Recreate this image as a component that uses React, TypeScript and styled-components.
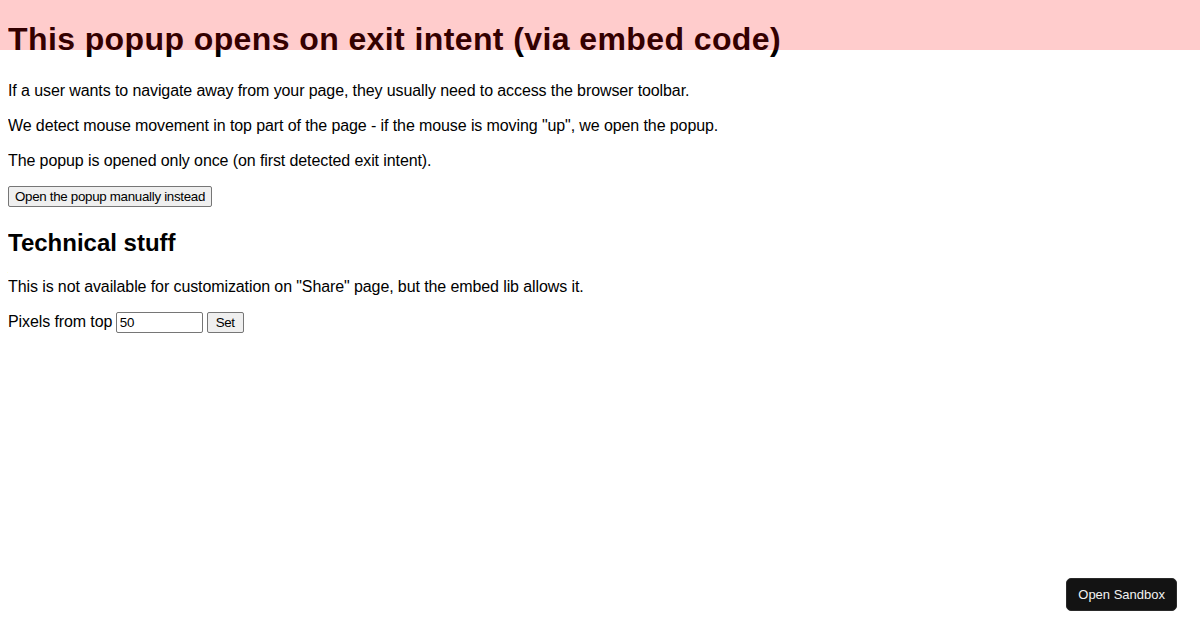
import styled, { createGlobalStyle } from "styled-components";

const GlobalStyle = createGlobalStyle`
  body {
    margin: 8px;
    font-family: "Liberation Sans", Arial, sans-serif;
    font-size: 16px;
    color: #000;
    background: #fff;
  }
`;

const Title = styled.h1`
  font-size: 32px;
  font-weight: bold;
  letter-spacing: 0.4px;
  line-height: 37px;
  margin: 13px 0 23px;
`;

const SubTitle = styled.h2`
  font-size: 24px;
  font-weight: bold;
  line-height: 28px;
  margin: 22px 0 20px;
`;

const Text = styled.p`
  margin: 16px 0;
  line-height: 19px;
  letter-spacing: -0.1px;
`;

const NativeButton = styled.button<{ $wide?: boolean }>`
  font: 13.333px "Liberation Sans", Arial, sans-serif;
  letter-spacing: -0.3px;
  line-height: 15px;
  padding: 2px ${(p) => (p.$wide ? 8 : 6)}px;
  color: #000;
  background: #efefef;
  border: 1px solid #767676;
  border-radius: 2px;
`;

const PixelsInput = styled.input`
  font: 13.333px "Liberation Sans", Arial, sans-serif;
  box-sizing: border-box;
  width: 87px;
  height: 21px;
  padding: 1px 3px;
  border: 1px solid #767676;
  border-radius: 2px;
  margin: 0 4px 0 -1px;
`;

// marks the exit-intent zone at the top of the page
const ExitZone = styled.div<{ $height: number }>`
  position: fixed;
  top: 0;
  left: 0;
  right: 0;
  height: ${(p) => p.$height}px;
  background: rgba(255, 0, 0, 0.2);
  pointer-events: none;
`;

const SandboxButton = styled.button`
  position: fixed;
  right: 23px;
  bottom: 19px;
  height: 33px;
  padding: 0 11px;
  font: 13px "Liberation Sans", Arial, sans-serif;
  color: #f2f2f2;
  background: #131313;
  border: 1px solid #2a2a2a;
  border-radius: 5px;
`;

export default function App() {
  const pixels = 50;

  return (
    <>
      <GlobalStyle />
      <Title>This popup opens on exit intent (via embed code)</Title>
      <Text>If a user wants to navigate away from your page, they usually need to access the browser toolbar.</Text>
      <Text>We detect mouse movement in top part of the page - if the mouse is moving "up", we open the popup.</Text>
      <Text>The popup is opened only once (on first detected exit intent).</Text>
      <Text>
        <NativeButton>Open the popup manually instead</NativeButton>
      </Text>
      <SubTitle>Technical stuff</SubTitle>
      <Text>This is not available for customization on "Share" page, but the embed lib allows it.</Text>
      <Text>
        Pixels from top <PixelsInput type="number" defaultValue={pixels} />
        <NativeButton $wide>Set</NativeButton>
      </Text>
      <ExitZone $height={pixels} />
      <SandboxButton>Open Sandbox</SandboxButton>
    </>
  );
}
